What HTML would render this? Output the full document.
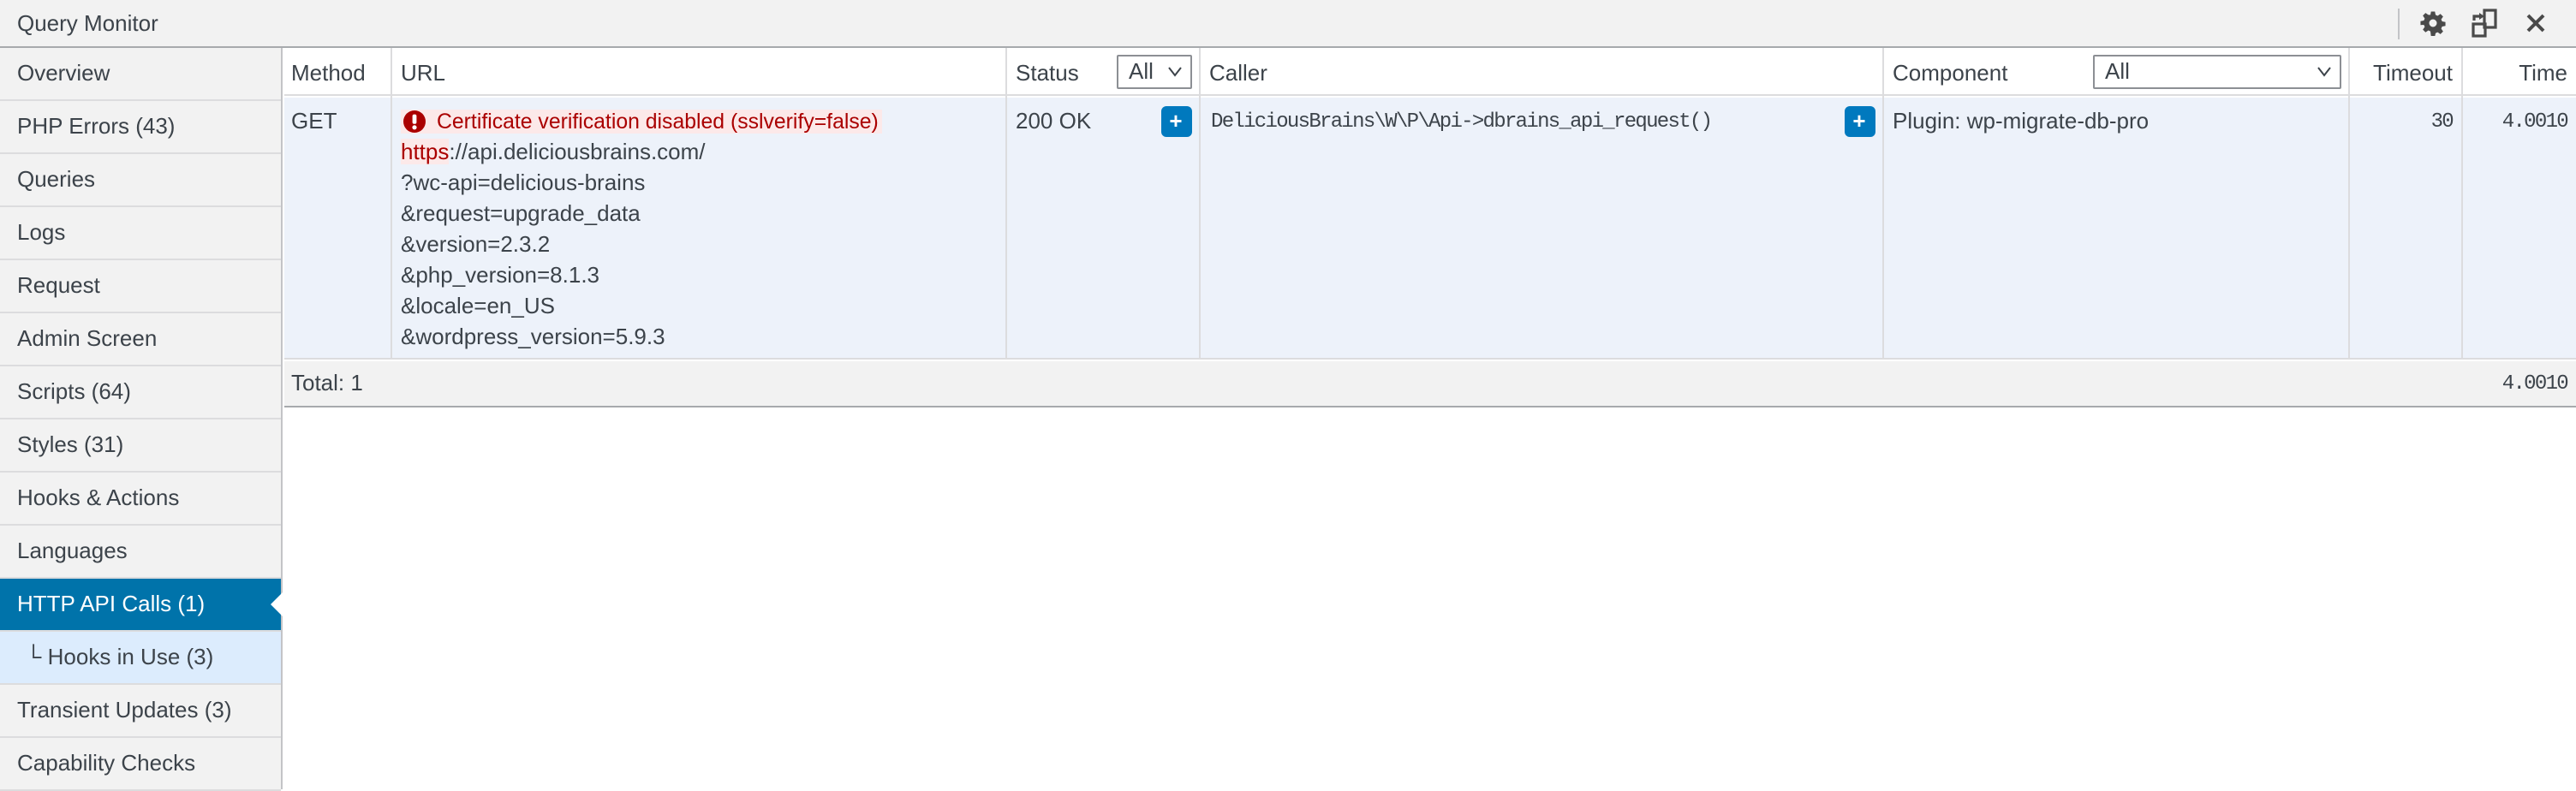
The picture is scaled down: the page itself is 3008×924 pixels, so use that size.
<!DOCTYPE html>
<html><head><meta charset="utf-8"><style>
*{box-sizing:border-box;margin:0;padding:0}
html,body{width:3008px;height:922px;overflow:hidden;background:#fff}
#s{position:absolute;left:0;top:0;width:1504px;height:461px;transform:scale(2);transform-origin:0 0;font-family:"Liberation Sans",sans-serif;font-size:13px;color:#3c434a;background:#fff}
.a{position:absolute}
#hd{left:0;top:0;width:1504px;height:28px;background:#f2f2f2;border-bottom:1px solid #a7aaad}
#hd .t{left:10px;top:0;line-height:27px}
#sb{left:0;top:28px;width:165px;height:433px;background:#f2f2f2;border-right:1px solid #c3c4c7}
.it{height:31px;line-height:30px;border-bottom:1px solid #dcdcde;padding-left:10px;white-space:nowrap;position:relative}
.sel{background:#0073aa;color:#fff}
.sub{background:#dcecfd}
.vl{position:absolute;width:1px;background:#dcdcde}
.m{font-family:"Liberation Mono",monospace;font-size:12px;letter-spacing:-0.85px}
.sel:after{content:"";position:absolute;right:-1px;top:8px;border:7px solid transparent;border-right:7px solid #fff;border-left:0;height:0}
.sl{position:absolute;border:1px solid #8c8f94;border-radius:1px;background:#fff;height:20px;line-height:18px;padding-left:6px}
.sl svg{position:absolute;right:5px;top:6px}
.pb{position:absolute;width:18px;height:18px;border-radius:3px;background:#0079be;color:#fff;text-align:center;line-height:17px;font-weight:bold;font-size:13px}
</style></head><body><div id="s">
<div id="hd" class="a"><div class="a t">Query Monitor</div>
<div class="a" style="left:1400px;top:5px;width:1px;height:18px;background:#c3c4c7"></div>
<svg class="a" style="left:1413px;top:6px" width="15" height="15" viewBox="0 0 20 20"><path fill="#4a4a4a" d="M8.5 1h3l.5 2.6 1.6.7 2.2-1.5 2.1 2.1-1.5 2.2.7 1.6 2.6.5v3l-2.6.5-.7 1.6 1.5 2.2-2.1 2.1-2.2-1.5-1.6.7-.5 2.6h-3L8 16.4l-1.6-.7-2.2 1.5-2.1-2.1 1.5-2.2-.7-1.6L.3 11.5v-3l2.6-.5.7-1.6-1.5-2.2 2.1-2.1 2.2 1.5L8 3.6zM10 7a3 3 0 1 0 0 6 3 3 0 0 0 0-6z"/></svg>
<svg class="a" style="left:1443px;top:5px" width="16" height="17" viewBox="0 0 16 17" fill="none" stroke="#4a4a4a" stroke-width="1.6"><rect x="7.5" y="1" width="6.5" height="10"/><rect x="1" y="9" width="7" height="7"/><path d="M1.5 7V4.5h3.5"/><path fill="#4a4a4a" stroke="none" d="M4.5 2.5l3 2-3 2z"/></svg>
<svg class="a" style="left:1475px;top:8px" width="11" height="11" viewBox="0 0 11 11"><path d="M1 1l9 9M10 1l-9 9" stroke="#4a4a4a" stroke-width="2"/></svg>
</div>
<div id="sb" class="a">
<div class="it">Overview</div><div class="it">PHP Errors (43)</div><div class="it">Queries</div><div class="it">Logs</div><div class="it">Request</div><div class="it">Admin Screen</div><div class="it">Scripts (64)</div><div class="it">Styles (31)</div><div class="it">Hooks &amp; Actions</div><div class="it">Languages</div><div class="it sel">HTTP API Calls (1)</div><div class="it sub"><span style="margin-left:5px">└ </span> Hooks in Use (3)</div><div class="it">Transient Updates (3)</div><div class="it">Capability Checks</div>
</div>
<div class="a" style="left:166px;top:28px;width:1338px;height:28px;background:#fff;border-bottom:1px solid #dcdcde"></div>
<div class="a" style="left:166px;top:57px;width:1338px;height:153px;background:#edf2fa;border-bottom:1px solid #dcdcde"></div>
<div class="a" style="left:166px;top:211px;width:1338px;height:27px;background:#f2f2f2;border-bottom:1px solid #a7aaad"></div>
<div class="vl" style="left:228px;top:28px;height:182px"></div>
<div class="vl" style="left:587px;top:28px;height:182px"></div>
<div class="vl" style="left:700px;top:28px;height:182px"></div>
<div class="vl" style="left:1099px;top:28px;height:182px"></div>
<div class="vl" style="left:1371px;top:28px;height:182px"></div>
<div class="vl" style="left:1437px;top:28px;height:182px"></div>
<div class="a" style="left:170px;top:34px;line-height:17px">Method</div>
<div class="a" style="left:234px;top:34px;line-height:17px">URL</div>
<div class="a" style="left:593px;top:34px;line-height:17px">Status</div>
<div class="sl" style="left:652px;top:32px;width:44px">All<svg width="8" height="6"><path d="M.5 .5l3.5 4.5 3.5-4.5" fill="none" stroke="#3c434a"/></svg></div>
<div class="a" style="left:706px;top:34px;line-height:17px">Caller</div>
<div class="a" style="left:1105px;top:34px;line-height:17px">Component</div>
<div class="sl" style="left:1222px;top:32px;width:145px">All<svg width="8" height="6"><path d="M.5 .5l3.5 4.5 3.5-4.5" fill="none" stroke="#3c434a"/></svg></div>
<div class="a" style="left:1372px;width:60px;text-align:right;top:34px;line-height:17px">Timeout</div>
<div class="a" style="left:1438px;width:61px;text-align:right;top:34px;line-height:17px">Time</div>
<div class="a" style="left:170px;top:62px;line-height:18px">GET</div>
<div class="a" style="left:234px;top:64px;height:14px;background:#fce9e9;padding:0 2px 0 21px;line-height:14px;color:#a00;font-size:12.4px;white-space:nowrap">
<svg class="a" style="left:1px;top:0px" width="14" height="14" viewBox="0 0 14 14"><circle cx="7" cy="7" r="6.5" fill="#a00"/><rect x="5.8" y="2.8" width="2.4" height="5.6" rx="1" fill="#fff"/><circle cx="7" cy="10.4" r="1.3" fill="#fff"/></svg>Certificate verification disabled (sslverify=false)</div>
<div class="a" style="left:234px;top:80px;line-height:18px;white-space:nowrap"><span style="color:#a00;background:#fce9e9">https</span>://api.deliciousbrains.com/<br>?wc-api=delicious-brains<br>&amp;request=upgrade_data<br>&amp;version=2.3.2<br>&amp;php_version=8.1.3<br>&amp;locale=en_US<br>&amp;wordpress_version=5.9.3</div>
<div class="a" style="left:593px;top:62px;line-height:18px">200 OK</div>
<div class="pb" style="left:677.5px;top:62px">+</div>
<div class="a m" style="left:707px;top:62px;line-height:18px;white-space:nowrap">DeliciousBrains\W\P\Api-&gt;dbrains_api_request()</div>
<div class="pb" style="left:1076.5px;top:62px">+</div>
<div class="a" style="left:1105px;top:62px;line-height:18px">Plugin: wp-migrate-db-pro</div>
<div class="a m" style="left:1372px;width:60px;text-align:right;top:62px;line-height:18px">30</div>
<div class="a m" style="left:1438px;width:61px;text-align:right;top:62px;line-height:18px">4.0010</div>
<div class="a" style="left:170px;top:215px;line-height:18px">Total: 1</div>
<div class="a m" style="left:1438px;width:61px;text-align:right;top:215px;line-height:18px">4.0010</div>
</div></body></html>
